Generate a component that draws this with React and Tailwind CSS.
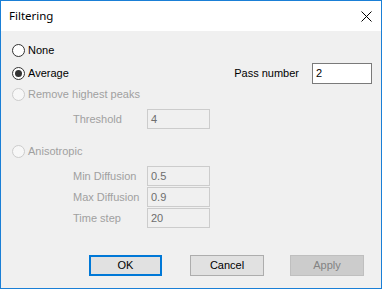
import React from 'react';

const font = { fontFamily: '"Liberation Sans", Arial, sans-serif' };

const Radio = ({ checked, disabled, label }) => (
  <div className={`flex items-center gap-[3px] text-[11px] ${disabled ? 'text-[#a0a0a0]' : 'text-black'}`}>
    <span
      className={`w-[13px] h-[13px] rounded-full border flex items-center justify-center ${
        disabled ? 'border-[#cccccc] bg-[#f7f7f7]' : 'border-[#333333] bg-white'
      }`}
    >
      {checked && <span className="w-[7px] h-[7px] rounded-full bg-[#333333]" />}
    </span>
    <span className="leading-none">{label}</span>
  </div>
);

const Field = ({ label, value }) => (
  <div className="flex items-center h-[20px]">
    <span className="w-[74px] text-[11px] text-[#a0a0a0]">{label}</span>
    <div className="w-[63px] h-[20px] border border-[#cccccc] bg-[#f0f0f0] flex items-center px-[3px] text-[11px] text-[#6d6d6d]">
      {value}
    </div>
  </div>
);

export default function App() {
  return (
    <div className="w-[382px] h-[289px] border border-[#1a7fd6] flex flex-col bg-[#f0f0f0]" style={font}>
      {/* Title bar */}
      <div className="h-[30px] bg-white flex items-center justify-between pl-[8px] pr-[9px] shrink-0">
        <span className="text-[11.5px] text-black" style={{ fontFamily: '"Noto Sans", "Open Sans", sans-serif' }}>
          Filtering
        </span>
        <svg width="11" height="11" viewBox="0 0 11 11" className="text-black">
          <path d="M0.5 0.5 L10.5 10.5 M10.5 0.5 L0.5 10.5" stroke="currentColor" strokeWidth="1" />
        </svg>
      </div>

      {/* Body */}
      <div className="flex-1 flex flex-col pl-[11px] pr-[9px]">
        <div className="mt-[13px] h-[13px] flex items-center">
          <Radio label="None" />
        </div>

        <div className="mt-[6px] h-[21px] flex items-center justify-between">
          <Radio checked label="Average" />
          <div className="flex items-center">
            <span className="text-[11px] text-black mr-[13px]">Pass number</span>
            <div className="w-[60px] h-[21px] border border-[#7a7a7a] bg-white flex items-center px-[3px] text-[11px] text-black">
              2
            </div>
          </div>
        </div>

        <div className="mt-[4px] h-[13px] flex items-center">
          <Radio disabled label="Remove highest peaks" />
        </div>

        <div className="mt-[8px] pl-[61px] flex flex-col">
          <Field label="Threshold" value="4" />
        </div>

        <div className="mt-[16px] h-[13px] flex items-center">
          <Radio disabled label="Anisotropic" />
        </div>

        <div className="mt-[8px] pl-[61px] flex flex-col gap-[1px]">
          <Field label="Min Diffusion" value="0.5" />
          <Field label="Max Diffusion" value="0.9" />
          <Field label="Time step" value="20" />
        </div>

        <div className="mt-[27px] flex items-center pl-[77px]">
          <div className="w-[73px] h-[21px] border-2 border-[#0078d7] bg-[#e1e1e1] flex items-center justify-center text-[11px] text-black">
            OK
          </div>
          <div className="ml-[28px] w-[74px] h-[21px] border border-[#adadad] bg-[#e1e1e1] flex items-center justify-center text-[11px] text-black">
            Cancel
          </div>
          <div className="ml-[26px] w-[74px] h-[21px] border border-[#bfbfbf] bg-[#cccccc] flex items-center justify-center text-[11px] text-[#838383]">
            Apply
          </div>
        </div>
      </div>
    </div>
  );
}
